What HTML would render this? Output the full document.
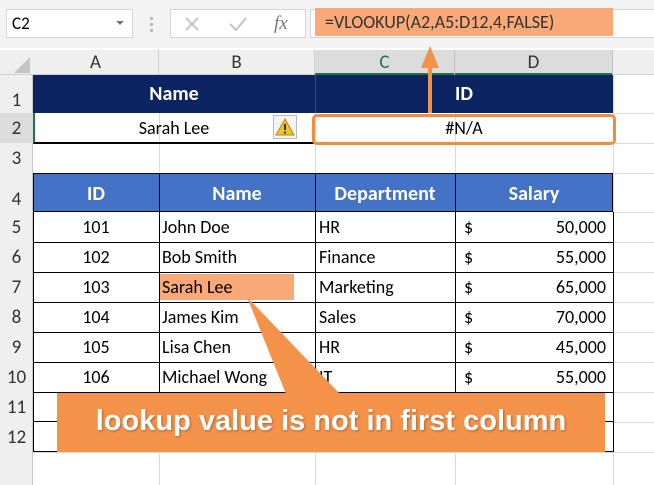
<!DOCTYPE html>
<html><head><meta charset="utf-8"><style>
body{margin:0;width:654px;height:485px;overflow:hidden;background:#fff;font-family:Calibri,"Carlito","Liberation Sans",sans-serif;position:relative}
.a{position:absolute;box-sizing:border-box}
.t{position:absolute;box-sizing:border-box;display:flex;align-items:center;font-size:18px;color:#000;white-space:nowrap}
.c{justify-content:center}
.r{justify-content:flex-end}
.h{color:#fff;font-weight:bold;font-size:20px}
.n{font-size:19px;color:#333}
</style></head><body>
<!-- toolbar -->
<div class="a" style="left:0;top:0;width:654px;height:48px;background:#f3f3f3"></div>
<div class="a" style="left:6px;top:9px;width:127px;height:29px;background:#fff;border:1px solid #d6d6d6"></div>
<div class="t" style="left:12px;top:9px;height:29px;font-size:17px">C2</div>
<div class="a" style="left:116px;top:21px;width:0;height:0;border-left:4px solid transparent;border-right:4px solid transparent;border-top:4px solid #777"></div>
<div class="a" style="left:150px;top:17px;width:3px;height:3px;background:#bbb"></div>
<div class="a" style="left:150px;top:23px;width:3px;height:3px;background:#bbb"></div>
<div class="a" style="left:150px;top:29px;width:3px;height:3px;background:#bbb"></div>
<div class="a" style="left:170px;top:9px;width:136px;height:29px;background:#fff;border:1px solid #d6d6d6"></div>
<svg class="a" style="left:183px;top:15px" width="18" height="18"><path d="M3 3L15 15M15 3L3 15" stroke="#bbb" stroke-width="1.6"/></svg>
<svg class="a" style="left:228px;top:15px" width="20" height="18"><path d="M2 9L8 15L18 3" stroke="#c4c4c4" stroke-width="2" fill="none"/></svg>
<div class="t" style="left:274px;top:9px;height:29px;font-family:'Liberation Serif',serif;font-style:italic;color:#777;font-size:19px">fx</div>
<div class="a" style="left:310px;top:9px;width:344px;height:29px;background:#fff;border:1px solid #d6d6d6;border-right:none"></div>
<div class="a" style="left:315px;top:8px;width:298px;height:28px;background:#f9a877"></div>
<div class="t" style="left:325px;top:8px;height:28px;font-size:18px;color:#333">=VLOOKUP(A2,A5:D12,4,FALSE)</div>
<!-- col headers -->
<div class="a" style="left:0;top:50px;width:654px;height:25px;background:#efefef;border-bottom:1px solid #d0d0d0"></div>
<div class="a" style="left:315px;top:50px;width:298px;height:25px;background:#dcdcdc;border-bottom:2px solid #217346"></div>
<div class="a" style="left:14px;top:57px;width:0;height:0;border-left:16px solid transparent;border-bottom:16px solid #c4c4c4"></div>
<div class="t c n" style="left:33px;top:50px;width:126px;height:25px;border-right:1px solid #d0d0d0">A</div>
<div class="t c n" style="left:159px;top:50px;width:156px;height:25px;border-right:1px solid #d0d0d0">B</div>
<div class="t c n" style="left:315px;top:50px;width:140px;height:25px;border-right:1px solid #c0c0c0;color:#217346">C</div>
<div class="t c n" style="left:455px;top:50px;width:158px;height:25px;border-right:1px solid #c0c0c0">D</div>
<!-- row headers -->
<div class="a" style="left:0;top:75px;width:33px;height:410px;background:#efefef;border-right:1px solid #c8c8c8"></div>
<div class="a" style="left:0;top:113px;width:33px;height:30px;background:#dcdcdc"></div>
<!-- gridlines -->
<div class="a" style="left:159px;top:75px;width:1px;height:410px;background:#dadada"></div>
<div class="a" style="left:315px;top:75px;width:1px;height:410px;background:#dadada"></div>
<div class="a" style="left:455px;top:75px;width:1px;height:410px;background:#dadada"></div>
<div class="a" style="left:613px;top:75px;width:1px;height:410px;background:#dadada"></div>
<div class="a" style="left:33px;top:173px;width:621px;height:1px;background:#dadada"></div>
<div class="a" style="left:613px;top:113px;width:41px;height:1px;background:#dadada"></div>
<div class="a" style="left:613px;top:143px;width:41px;height:1px;background:#dadada"></div>
<div class="a" style="left:613px;top:212px;width:41px;height:1px;background:#dadada"></div>
<div class="a" style="left:613px;top:242px;width:41px;height:1px;background:#dadada"></div>
<div class="a" style="left:613px;top:272px;width:41px;height:1px;background:#dadada"></div>
<div class="a" style="left:613px;top:302px;width:41px;height:1px;background:#dadada"></div>
<div class="a" style="left:613px;top:332px;width:41px;height:1px;background:#dadada"></div>
<div class="a" style="left:613px;top:362px;width:41px;height:1px;background:#dadada"></div>
<div class="a" style="left:613px;top:392px;width:41px;height:1px;background:#dadada"></div>
<div class="a" style="left:613px;top:422px;width:41px;height:1px;background:#dadada"></div>
<div class="a" style="left:33px;top:452px;width:621px;height:1px;background:#dadada"></div>
<!-- row numbers -->
<div class="t c n" style="left:0;top:75px;width:33px;height:38px;align-items:flex-end;padding-bottom:1px">1</div>
<div class="t c n" style="left:0;top:113px;width:33px;height:30px">2</div>
<div class="t c n" style="left:0;top:143px;width:33px;height:30px">3</div>
<div class="t c n" style="left:0;top:173px;width:33px;height:39px;align-items:flex-end;padding-bottom:1px">4</div>
<div class="t c n" style="left:0;top:212px;width:33px;height:30px">5</div>
<div class="t c n" style="left:0;top:242px;width:33px;height:30px">6</div>
<div class="t c n" style="left:0;top:272px;width:33px;height:30px">7</div>
<div class="t c n" style="left:0;top:302px;width:33px;height:30px">8</div>
<div class="t c n" style="left:0;top:332px;width:33px;height:30px">9</div>
<div class="t c n" style="left:0;top:362px;width:33px;height:30px">10</div>
<div class="t c n" style="left:0;top:392px;width:33px;height:30px">11</div>
<div class="t c n" style="left:0;top:422px;width:33px;height:30px">12</div>
<!-- row1 header -->
<div class="a" style="left:33px;top:75px;width:580px;height:38px;background:#0c2461"></div>
<div class="a" style="left:315px;top:75px;width:1px;height:38px;background:#3a4d80"></div>
<div class="t c h" style="left:33px;top:75px;width:282px;height:38px">Name</div>
<div class="t c h" style="left:315px;top:75px;width:298px;height:38px">ID</div>
<!-- row2 -->
<div class="a" style="left:33px;top:113px;width:282px;height:31px;border-left:2px solid #217346;border-bottom:2px solid #000"></div>
<div class="t c" style="left:33px;top:113px;width:282px;height:30px">Sarah Lee</div>
<div class="a" style="left:273px;top:115px;width:24px;height:24px;background:#f3f3f3;border:1px solid #bbb"></div>
<svg class="a" style="left:275px;top:117px" width="20" height="20"><path d="M10 2L19 18H1Z" fill="#f4c32a" stroke="#b8860b" stroke-width="1"/><rect x="9" y="7" width="2" height="6" fill="#333"/><rect x="9" y="14.5" width="2" height="2" fill="#333"/></svg>
<div class="a" style="left:312px;top:114px;width:304px;height:31px;border:3px solid #f28d3f;border-radius:5px"></div>
<div class="t c" style="left:315px;top:113px;width:298px;height:30px">#N/A</div>
<!-- row4 header -->
<div class="a" style="left:33px;top:173px;width:580px;height:39px;background:#4472c4;border:1px solid #000"></div>
<div class="a" style="left:159px;top:173px;width:1px;height:39px;background:#000"></div>
<div class="a" style="left:315px;top:173px;width:1px;height:39px;background:#000"></div>
<div class="a" style="left:455px;top:173px;width:1px;height:39px;background:#000"></div>
<div class="t c h" style="left:33px;top:173px;width:126px;height:41px">ID</div>
<div class="t c h" style="left:159px;top:173px;width:156px;height:41px">Name</div>
<div class="t c h" style="left:315px;top:173px;width:140px;height:41px">Department</div>
<div class="t c h" style="left:455px;top:173px;width:158px;height:41px">Salary</div>
<!-- data borders -->
<div class="a" style="left:33px;top:212px;width:1px;height:240px;background:#000"></div>
<div class="a" style="left:159px;top:212px;width:1px;height:180px;background:#000"></div>
<div class="a" style="left:315px;top:212px;width:1px;height:180px;background:#000"></div>
<div class="a" style="left:455px;top:212px;width:1px;height:180px;background:#000"></div>
<div class="a" style="left:613px;top:212px;width:1px;height:240px;background:#000"></div>
<div class="a" style="left:33px;top:242px;width:581px;height:1px;background:#000"></div>
<div class="a" style="left:33px;top:272px;width:581px;height:1px;background:#000"></div>
<div class="a" style="left:33px;top:302px;width:581px;height:1px;background:#000"></div>
<div class="a" style="left:33px;top:332px;width:581px;height:1px;background:#000"></div>
<div class="a" style="left:33px;top:362px;width:581px;height:1px;background:#000"></div>
<div class="a" style="left:33px;top:392px;width:581px;height:1px;background:#000"></div>
<div class="a" style="left:33px;top:421px;width:581px;height:1px;background:#000"></div>
<div class="a" style="left:33px;top:451px;width:581px;height:1px;background:#000"></div>
<!-- highlight -->
<div class="a" style="left:160px;top:274px;width:134px;height:26px;background:#f9a877"></div>
<!-- data -->
<div class="t c" style="left:33px;top:212px;width:126px;height:30px">101</div><div class="t" style="left:162px;top:212px;height:30px">John Doe</div><div class="t" style="left:319px;top:212px;height:30px">HR</div><div class="t" style="left:464px;top:212px;height:30px">$</div><div class="t r" style="left:455px;top:212px;width:151px;height:30px">50,000</div>
<div class="t c" style="left:33px;top:242px;width:126px;height:30px">102</div><div class="t" style="left:162px;top:242px;height:30px">Bob Smith</div><div class="t" style="left:319px;top:242px;height:30px">Finance</div><div class="t" style="left:464px;top:242px;height:30px">$</div><div class="t r" style="left:455px;top:242px;width:151px;height:30px">55,000</div>
<div class="t c" style="left:33px;top:272px;width:126px;height:30px">103</div><div class="t" style="left:162px;top:272px;height:30px">Sarah Lee</div><div class="t" style="left:319px;top:272px;height:30px">Marketing</div><div class="t" style="left:464px;top:272px;height:30px">$</div><div class="t r" style="left:455px;top:272px;width:151px;height:30px">65,000</div>
<div class="t c" style="left:33px;top:302px;width:126px;height:30px">104</div><div class="t" style="left:162px;top:302px;height:30px">James Kim</div><div class="t" style="left:319px;top:302px;height:30px">Sales</div><div class="t" style="left:464px;top:302px;height:30px">$</div><div class="t r" style="left:455px;top:302px;width:151px;height:30px">70,000</div>
<div class="t c" style="left:33px;top:332px;width:126px;height:30px">105</div><div class="t" style="left:162px;top:332px;height:30px">Lisa Chen</div><div class="t" style="left:319px;top:332px;height:30px">HR</div><div class="t" style="left:464px;top:332px;height:30px">$</div><div class="t r" style="left:455px;top:332px;width:151px;height:30px">45,000</div>
<div class="t c" style="left:33px;top:362px;width:126px;height:30px">106</div><div class="t" style="left:162px;top:362px;height:30px">Michael Wong</div><div class="t" style="left:319px;top:362px;height:30px">IT</div><div class="t" style="left:464px;top:362px;height:30px">$</div><div class="t r" style="left:455px;top:362px;width:151px;height:30px">55,000</div>
<!-- callout -->
<svg class="a" style="left:0;top:0" width="654" height="485">
<path d="M247 297L340 394H286Z" fill="#f4924a"/>
<rect x="57" y="393" width="548" height="59" fill="#f4924a"/>
<path d="M430 113V62" stroke="#f4924a" stroke-width="4"/>
<path d="M421 68L430 46L439 68Z" fill="#f4924a"/>
</svg>
<div class="t c" style="left:57px;top:393px;width:548px;height:57px;color:#fff;font-family:'Liberation Sans',sans-serif;font-weight:bold;font-size:29px;text-shadow:1px 1px 2px rgba(0,0,0,.3)">lookup value is not in first column</div>
</body></html>
